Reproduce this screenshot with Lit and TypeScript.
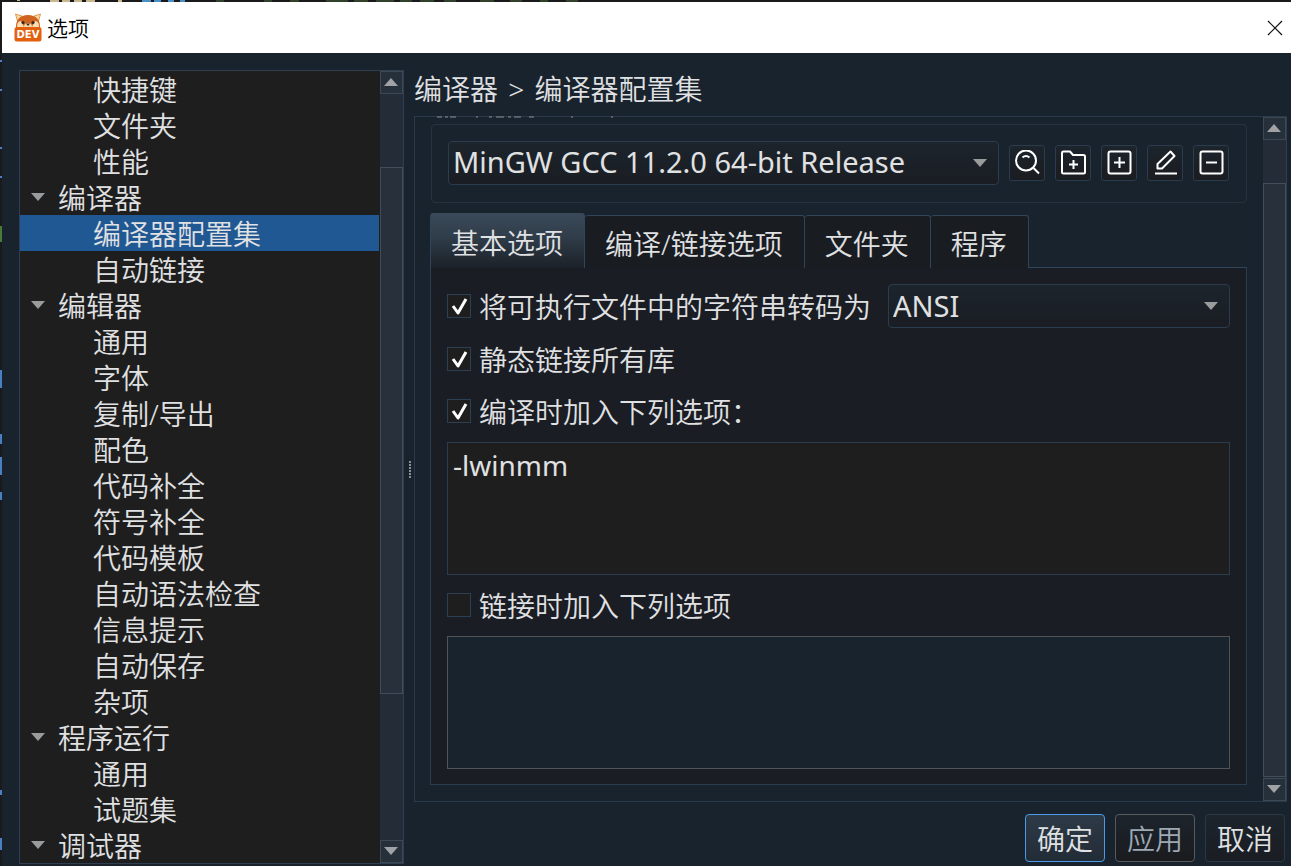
import { LitElement, html, css, svg, nothing } from "lit";
import { customElement, property, state } from "lit/decorators.js";
import { classMap } from "lit/directives/class-map.js";

interface Row {
  label: string;
  group?: boolean;
}

const ROWS: Row[] = [
  { label: "快捷键" },
  { label: "文件夹" },
  { label: "性能" },
  { label: "编译器", group: true },
  { label: "编译器配置集" },
  { label: "自动链接" },
  { label: "编辑器", group: true },
  { label: "通用" },
  { label: "字体" },
  { label: "复制/导出" },
  { label: "配色" },
  { label: "代码补全" },
  { label: "符号补全" },
  { label: "代码模板" },
  { label: "自动语法检查" },
  { label: "信息提示" },
  { label: "自动保存" },
  { label: "杂项" },
  { label: "程序运行", group: true },
  { label: "通用" },
  { label: "试题集" },
  { label: "调试器", group: true },
];

const TABS = ["基本选项", "编译/链接选项", "文件夹", "程序"];

const TOOLS = [
  {
    name: "查找编译器",
    art: svg`<circle cx="11" cy="10.500" r="10"/><path d="M18.500 18 24 23.500M7.500 7.500Q11 4.500 14.500 7.500"/>`,
  },
  {
    name: "从文件夹添加",
    art: svg`<path d="M1 22V3Q1 1.500 2.500 1.500H9L12 5H22.500Q24 5 24 6.500V22Q24 23.500 22.500 23.500H2.500Q1 23.500 1 22ZM12.500 10v9M8 14.500h9"/>`,
  },
  {
    name: "添加空白配置",
    art: svg`<rect x="1.500" y="1.500" width="22" height="22" rx="2"/><path d="M12.500 7v11M7 12.500h11"/>`,
  },
  {
    name: "重命名",
    art: svg`<path d="M17.500 1.500 21.500 6 9 18.500H4.500V14ZM2 23.500H24"/>`,
  },
  {
    name: "删除",
    art: svg`<rect x="1.500" y="1.500" width="22" height="22" rx="2"/><path d="M7 12.500h11"/>`,
  },
];

/* Vertical scroll bar with arrow buttons; the thumb is placed by track fractions. */
@customElement("side-scrollbar")
class SideScrollbar extends LitElement {
  @property({ type: Number }) before = 0;
  @property({ type: Number }) size = 1;
  @property({ type: Number }) after = 0;

  static styles = css`
    :host {
      display: flex;
      flex-direction: column;
      width: 24px;
      flex: none;
      box-sizing: border-box;
      background: #242c37;
      border-right: 1px solid #2d3f51;
    }
    button {
      display: grid;
      place-items: center;
      flex: none;
      height: 23px;
      padding: 0 1px 1px 0;
      border: 1px solid #3d4855;
      background: #26303a;
    }
    .track {
      flex: 1;
      display: flex;
      flex-direction: column;
    }
    .thumb {
      border: 1px solid #434d59;
      background: #28313b;
      box-sizing: border-box;
    }
    polygon {
      fill: #a0a2a5;
    }
  `;

  render() {
    return html`
      <button aria-label="向上滚动">
        <svg width="14" height="8"><polygon points="0,8 7,0 14,8" /></svg>
      </button>
      <div class="track">
        <div style="flex:${this.before} 0 0"></div>
        <div class="thumb" style="flex:${this.size} 0 0"></div>
        <div style="flex:${this.after} 0 0"></div>
      </div>
      <button aria-label="向下滚动">
        <svg width="14" height="8"><polygon points="0,0 14,0 7,8" /></svg>
      </button>
    `;
  }
}

@customElement("app-root")
class AppRoot extends LitElement {
  @state() private selected = 4;
  @state() private tab = 0;

  static styles = css`
    :host {
      display: block;
      height: 100vh;
      overflow: hidden;
      box-sizing: border-box;
      padding: 2px 0 0 2px;
      background: #1a1a1c;
      color: #e0e1e3;
      font-family: "Noto Sans", "Noto Sans CJK SC", sans-serif;
      font-size: 28px;
      line-height: 36px;
      font-weight: 350;
      position: relative;
    }
    * {
      box-sizing: border-box;
    }
    button,
    select,
    textarea {
      font: inherit;
      color: inherit;
      margin: 0;
    }
    select,
    textarea {
      font-weight: 400;
    }
    .editor {
      position: absolute;
      left: 0;
      top: 0;
    }
    .dialog {
      height: 100%;
      display: flex;
      flex-direction: column;
      background: #19232d;
    }
    .title {
      display: flex;
      align-items: center;
      gap: 5px;
      height: 51px;
      flex: none;
      padding: 0 8px 0 12px;
      background: #fff;
      color: #000;
    }
    .title h1 {
      flex: 1;
      margin: 0;
      font-size: 21px;
      font-weight: inherit;
    }
    .close {
      display: grid;
      padding: 0;
      border: 0;
      background: none;
    }
    .dev {
      font: 700 10px "DejaVu Sans", sans-serif;
      fill: #fff;
    }
    .body {
      flex: 1;
      min-height: 0;
      display: flex;
      padding: 17px 4px 2px 17px;
    }
    .tree {
      width: 385px;
      flex: none;
      display: flex;
      overflow: hidden;
      border: 1px solid #2d3f51;
      border-right: 0;
      background: #1e1e1e;
    }
    .tree ul {
      flex: 1;
      margin: 0;
      padding: 0 1px 0 0;
      list-style: none;
    }
    .row {
      display: flex;
      align-items: center;
      width: 100%;
      height: 36px;
      padding: 2px 0 0 73px;
      border: 0;
      background: none;
      text-align: left;
    }
    .row.group {
      padding-left: 11px;
      gap: 13px;
    }
    .row.on {
      background: #205893;
    }
    .row .arrow {
      margin-bottom: 3px;
    }
    .arrow {
      fill: #9a9b9d;
      flex: none;
    }
    .splitter {
      width: 10px;
      flex: none;
      display: grid;
      place-items: center end;
      padding-top: 5px;
    }
    .main {
      flex: 1;
      min-width: 0;
      display: flex;
      flex-direction: column;
    }
    .crumb {
      height: 46px;
      flex: none;
      margin: 0;
      line-height: 38px;
      font-size: inherit;
      font-weight: inherit;
      word-break: keep-all;
    }
    .crumb span {
      margin: 0 3px;
    }
    .area {
      flex: 1;
      min-height: 0;
      display: flex;
      position: relative;
      border: 1px solid #2a3a4a;
      border-right: 0;
    }
    .clipped {
      position: absolute;
      left: 21px;
      top: -1px;
    }
    .content {
      flex: 1;
      min-width: 0;
      display: flex;
      flex-direction: column;
      padding: 7px 16px 16px 15px;
    }
    .set {
      display: flex;
      align-items: center;
      gap: 10px;
      height: 79px;
      flex: none;
      padding: 0 17px 2px 16px;
      border: 1px solid #26333f;
      border-radius: 4px;
      margin: 0 0 10px 1px;
    }
    .combo {
      flex: 1;
      min-width: 0;
      display: grid;
      align-items: center;
    }
    .combo > * {
      grid-area: 1 / 1;
    }
    .combo .arrow {
      justify-self: end;
      margin-right: 12px;
      pointer-events: none;
    }
    select {
      appearance: none;
      width: 100%;
      height: 44px;
      padding: 0 30px 1px 4px;
      border: 1px solid #2b3c4e;
      border-radius: 4px;
      background: linear-gradient(#1c242c, #1a1d23);
      font-size: 29px;
    }
    .tool {
      display: grid;
      place-items: center;
      width: 36px;
      height: 36px;
      padding: 0 0 1px;
      border: 1px solid #2b3c4e;
      border-radius: 3px;
      background: linear-gradient(#1c242c, #1a1c20);
    }
    .tool svg {
      fill: none;
      stroke: #fff;
      stroke-width: 2;
      stroke-linejoin: round;
    }
    .tabs {
      display: flex;
      align-items: flex-end;
      height: 55px;
      flex: none;
    }
    .tab {
      height: 53px;
      padding: 4px 21px 0 20px;
      border: 1px solid #30445a;
      border-width: 1px 1px 0 0;
      border-radius: 3px 3px 0 0;
      background: #191d22;
    }
    .tab.on {
      height: 55px;
      border-width: 0 1px 0 1px;
      background: linear-gradient(#3b4a5a, #2f3c49 45%, #1b2128);
    }
    .rule {
      flex: 1;
      align-self: flex-end;
      border-top: 1px solid #30445a;
    }
    .panel {
      flex: 1;
      min-height: 0;
      display: flex;
      flex-direction: column;
      padding: 16px 16px 15px;
      border: 1px solid #2b3c4e;
      border-top: 0;
      background: #1a1d23;
    }
    .line {
      display: flex;
      align-items: center;
      gap: 17px;
      height: 44px;
      flex: none;
    }
    .mid {
      height: 36px;
      margin-top: 13px;
    }
    .next {
      height: 36px;
      margin-top: 16px;
    }
    .low {
      height: 36px;
      margin-top: 12px;
    }
    label {
      display: flex;
      align-items: center;
      gap: 8px;
      white-space: nowrap;
    }
    .caption {
      padding-top: 2px;
    }
    input {
      appearance: none;
      width: 24px;
      height: 24px;
      margin: 0;
      display: grid;
      place-items: center;
      border: 1px solid #2b4052;
      background: #1e1e1e;
    }
    .check {
      display: grid;
      place-items: center;
    }
    .check > * {
      grid-area: 1 / 1;
    }
    .check svg {
      visibility: hidden;
      pointer-events: none;
      fill: none;
      stroke: #fff;
      stroke-width: 3;
      stroke-linejoin: round;
      z-index: 1;
    }
    .check input:checked + svg {
      visibility: visible;
    }
    textarea {
      flex: 1;
      min-height: 0;
      width: 100%;
      margin-top: 13px;
      padding: 4px 5px;
      border: 1px solid #2b3c4e;
      background: #1e1e1e;
      resize: none;
      outline: 0;
    }
    textarea:disabled {
      border-color: #525356;
      background: #19232d;
    }
    .actions {
      display: flex;
      justify-content: flex-end;
      gap: 10px;
      padding: 12px 2px 2px 0;
    }
    .act {
      width: 80px;
      height: 48px;
      padding: 2px 0 0;
      border: 1px solid #2b3845;
      border-radius: 4px;
      background: linear-gradient(#1c242c, #1a1d23);
    }
    .act.ok {
      border-color: #4b9bea;
      background: linear-gradient(#2d3a47, #222c37);
    }
    .act:disabled {
      border-color: #58595b;
      color: #9da9b5;
      background: linear-gradient(#1c242c, #1a1b1e);
    }
  `;

  private check(label: string, checked: boolean) {
    return html`<label>
      <span class="check">
        <input type="checkbox" .checked=${checked} />
        <svg width="24" height="24"><path d="M6 12 11 19 19 5" /></svg>
      </span>
      <span class="caption">${label}</span>
    </label>`;
  }

  private arrow() {
    return html`<svg class="arrow" width="14" height="8"><polygon points="0,0 14,0 7,8" /></svg>`;
  }

  render() {
    return html`
      <svg class="editor" width="620" height="866">
        <path d="M17 0h3M50 1h9M62 1h8M74 1h8M86 1h9M118 1h4" stroke="#c8b890" stroke-width="2" />
        <path d="M142 1h9M154 1h7M168 1h6M180 1h5" stroke="#4a90c8" stroke-width="2" />
        <path d="M216 1h8M264 1h8M290 1h9M326 1h22M354 1h14M376 1h18M400 1h12M420 1h14M444 1h12M480 1h14M510 1h12M540 1h8M566 1h12" stroke="#4a6a38" stroke-width="1" />
        <path d="M1 60v2M1 89v2M1 147v2M1 176v2M1 370v18M1 434v10M1 457v18M1 492v8M1 838v12M1 790v5" stroke="#4a80c0" stroke-width="2" />
        <path d="M1 226v16" stroke="#4a7a38" stroke-width="2" />
      </svg>
      <div class="dialog">
        <header class="title">
          <svg width="28" height="29" viewBox="0 0 28 29">
            <path d="M1.500 1 8 3 3.500 8ZM26.500 1 20 3 24.500 8Z" fill="#f4d9a0" stroke="#dc9c58" />
            <path d="M14 2C6 2 1.500 7 2 15h24C26.500 7 22 2 14 2Z" fill="#cf6420" />
            <path d="M3 14q0-6 4-6l3 6ZM25 14q0-6-4-6l-3 6Z" fill="#f6dfb4" />
            <circle cx="9" cy="9.500" r="1.500" fill="#3b2420" />
            <circle cx="19" cy="9.500" r="1.500" fill="#3b2420" />
            <path d="M10 14q0-4 4-4t4 4Z" fill="#f3d8a8" />
            <path d="M12 10.500h4l-2 2.500Z" fill="#3b2420" />
            <rect x="0.500" y="14" width="27" height="14.500" rx="2.500" fill="#e3600f" />
            <text class="dev" x="14" y="25" text-anchor="middle">DEV</text>
          </svg>
          <h1>选项</h1>
          <button class="close" aria-label="关闭">
            <svg width="16" height="16"><path d="M1 1 15 15M15 1 1 15" stroke="#111" stroke-width="1.200" /></svg>
          </button>
        </header>
        <div class="body">
          <nav class="tree">
            <ul>
              ${ROWS.map(
                (row, i) => html`<li>
                  <button
                    class=${classMap({ row: true, group: !!row.group, on: i === this.selected })}
                    @click=${() => (this.selected = i)}
                  >
                    ${row.group ? this.arrow() : nothing}<span>${row.label}</span>
                  </button>
                </li>`
              )}
            </ul>
            <side-scrollbar .before=${73} .size=${527} .after=${146}></side-scrollbar>
          </nav>
          <div class="splitter">
            <svg width="5" height="18">
              <path d="M1 0v18" stroke="#8a9299" stroke-width="2" stroke-dasharray="2 1" />
            </svg>
          </div>
          <main class="main">
            <h2 class="crumb">编译器<span> &gt; </span>编译器配置集</h2>
            <div class="area">
              <svg class="clipped" width="190" height="2">
                <path d="M1 1h5M9 1h3M14 1h6M40 1h2M53 1h3M60 1h8M72 1h3M78 1h7M93 1h5M135 1h2M175 1h2" stroke="#8a9096" />
              </svg>
              <div class="content">
                <section class="set">
                  <div class="combo">
                    <select aria-label="编译器配置集">
                      <option>MinGW GCC 11.2.0 64-bit Release</option>
                    </select>
                    ${this.arrow()}
                  </div>
                  ${TOOLS.map(
                    (t) => html`<button class="tool" aria-label=${t.name}>
                      <svg width="25" height="25" viewBox="0 0 25 25">${t.art}</svg>
                    </button>`
                  )}
                </section>
                <div class="tabs" role="tablist">
                  ${TABS.map(
                    (t, i) => html`<button
                      role="tab"
                      aria-selected=${i === this.tab}
                      class=${classMap({ tab: true, on: i === this.tab })}
                      @click=${() => (this.tab = i)}
                    >
                      ${t}
                    </button>`
                  )}
                  <div class="rule"></div>
                </div>
                <section class="panel" role="tabpanel">
                  <div class="line">
                    ${this.check("将可执行文件中的字符串转码为", true)}
                    <div class="combo">
                      <select aria-label="字符集">
                        <option>ANSI</option>
                      </select>
                      ${this.arrow()}
                    </div>
                  </div>
                  <div class="line mid">${this.check("静态链接所有库", true)}</div>
                  <div class="line next">${this.check("编译时加入下列选项：", true)}</div>
                  <textarea aria-label="编译选项" .value=${"-lwinmm"}></textarea>
                  <div class="line low">${this.check("链接时加入下列选项", false)}</div>
                  <textarea aria-label="链接选项" disabled></textarea>
                </section>
              </div>
              <side-scrollbar .before=${43} .size=${594} .after=${1}></side-scrollbar>
            </div>
            <footer class="actions">
              <button class="act ok">确定</button>
              <button class="act" disabled>应用</button>
              <button class="act">取消</button>
            </footer>
          </main>
        </div>
      </div>
    `;
  }
}
